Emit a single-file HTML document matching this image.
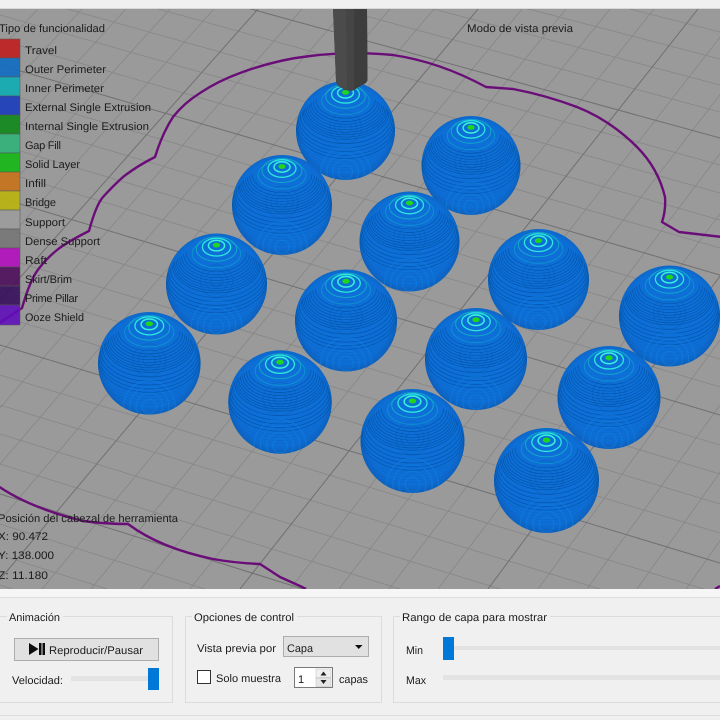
<!DOCTYPE html>
<html lang="es"><head><meta charset="utf-8"><title>Vista previa</title>
<style>
html,body{margin:0;padding:0;width:720px;height:720px;overflow:hidden;background:#f0f0f0}
svg{display:block;overflow:hidden}
text{font-family:"Liberation Sans",sans-serif;font-size:11px;fill:#1a1a1a;text-rendering:geometricPrecision}
</style></head><body>
<svg width="720" height="720" viewBox="0 0 720 720" xmlns="http://www.w3.org/2000/svg">
<defs>
<filter id="b" filterUnits="userSpaceOnUse" x="0" y="0" width="720" height="720"><feGaussianBlur stdDeviation=".35"/></filter>
<radialGradient id="sg" cx="50%" cy="48%" r="52%"><stop offset="0" stop-color="#0b6fd8"/><stop offset=".85" stop-color="#0a6ed6"/><stop offset="1" stop-color="#0a60bb"/></radialGradient>
<clipPath id="vp"><rect x="0" y="9" width="720" height="580"/></clipPath>
<clipPath id="cc"><circle r="50"/></clipPath>
<g id="s">
<circle r="50" fill="url(#sg)"/>
<g clip-path="url(#cc)" fill="none">
<g stroke="#05509f" stroke-width=".7" stroke-opacity=".75">
<path d="M-30 -31.2A30 18.9 0 0 0 30 -31.2"/><path d="M-32.5 -29.6A32.5 20.5 0 0 0 32.5 -29.6"/><path d="M-34.7 -28.1A34.7 21.9 0 0 0 34.7 -28.1"/><path d="M-36.6 -26.5A36.6 23 0 0 0 36.6 -26.5"/><path d="M-38.4 -25A38.4 24.2 0 0 0 38.4 -25"/><path d="M-40 -23.4A40 25.2 0 0 0 40 -23.4"/><path d="M-41.4 -21.8A41.4 26.1 0 0 0 41.4 -21.8"/><path d="M-42.7 -20.3A42.7 26.9 0 0 0 42.7 -20.3"/><path d="M-43.9 -18.7A43.9 27.6 0 0 0 43.9 -18.7"/><path d="M-45.8 -15.6A45.8 28.9 0 0 0 45.8 -15.6"/><path d="M-47.4 -12.5A47.4 29.9 0 0 0 47.4 -12.5"/><path d="M-48.5 -9.4A48.5 30.6 0 0 0 48.5 -9.4"/><path d="M-49.4 -6.2A49.4 31.1 0 0 0 49.4 -6.2"/><path d="M-49.8 -3.1A49.8 31.4 0 0 0 49.8 -3.1"/>
</g>
<g stroke="#0558ae" stroke-width=".5" stroke-opacity=".4">
<path d="M-50 0A50 31.5 0 0 0 50 0"/><path d="M-49.8 3.1A49.8 31.4 0 0 0 49.8 3.1"/><path d="M-49.4 6.2A49.4 31.1 0 0 0 49.4 6.2"/><path d="M-48.5 9.4A48.5 30.6 0 0 0 48.5 9.4"/>
</g>
<g stroke="#054f9f" stroke-width="1" stroke-opacity=".25"><circle cy="-3" r="6"/><circle cy="-3" r="11"/><circle cy="-3" r="16"/></g>
<g stroke="#1b86e6" stroke-width="1.2" stroke-opacity=".4"><circle cy="42" r="7"/><circle cy="42" r="13"/><circle cy="42" r="19"/><circle cy="42" r="25"/></g>
<ellipse cy="-30" rx="24" ry="14" stroke="#18b0c8" stroke-width=".9" stroke-opacity=".55"/>
<ellipse cy="-34.500" rx="20" ry="12" stroke="#17b4c8" stroke-width="1" stroke-opacity=".8"/>
<ellipse cy="-36.500" rx="14" ry="8.800" stroke="#2de6dc" stroke-width="1.300"/>
<ellipse cy="-38" rx="8" ry="5.200" stroke="#39f0dc" stroke-width="1.500"/>
</g>
<ellipse cy="-38.500" rx="3.600" ry="2.400" fill="#20d61e"/>
</g>
</defs>

<g filter="url(#b)">
<rect width="720" height="720" fill="#f0f0f0"/>
<rect y="9" width="720" height="580" fill="#9a9a9a"/>
<rect y="8" width="720" height="1" fill="#d8d8d8"/>

<g clip-path="url(#vp)">
<g stroke="#868686" stroke-width=".8" fill="none">
<path d="M38 9L-504 589M82 9L-454 589M126 9L-405 589M170 9L-355 589M214 9L-306 589M302 9L-206 589M346 9L-157 589M390 9L-107 589M434 9L-58 589M522 9L42 589M566 9L91 589M610 9L141 589M654 9L190 589M742 9L290 589M786 9L339 589M830 9L389 589M874 9L438 589M962 9L538 589M1006 9L587 589M1050 9L637 589M1094 9L686 589"/>
<path d="M0 -152L720 32M0 -129L720 59M0 -106L720 85M0 -83L720 112M0 -35L720 165M0 -10L720 193M0 15L720 220M0 40L720 248M0 92L720 303M0 118L720 331M0 145L720 359M0 171L720 387M0 227L720 445M0 257L720 474M0 286L720 504M0 316L720 533M0 375L704 589M0 405L600 589M0 434L500 589M0 464L400 589M0 524L205 589M0 555L107 589M0 585L12 589"/>
</g>
<g stroke="#707070" stroke-width="1" fill="none">
<path d="M258 9L-256 589M478 9L-8 589M698 9L240 589M918 9L488 589M1138 9L736 589"/>
<path d="M0 -60L720 138M0 65L720 275M0 198L720 415M0 345L720 563M0 494L303 589"/>
</g>
<g stroke="#6a0f78" stroke-width="2.400" fill="none" stroke-linejoin="round">
<path d="M-2 324L22 308Q30 280 38.500 269Q47 258 57 250Q67 242 89 231Q96 205 103 197Q113 186 123 177Q137 166 155 157Q162 134 173 117Q184 103 200 93Q218 81 240 73Q275 60 310 56Q350 51 393 55Q440 62 486 87L513 89Q545 95 577 107Q610 120 637 147Q658 168 665 197Q666 210 662 222L679 232L722 237"/>
<path d="M-2 486Q30 508 83 521Q105 524 128 524Q160 548 213 559Q235 563 260 564L280 577L300 586L306 589"/>
<path d="M715 589L720 586"/>
</g>

<use href="#s" transform="translate(345.500 130.500) scale(.99)"/>
<use href="#s" transform="translate(471 165.500) scale(.99)"/>
<use href="#s" transform="translate(282 205) scale(1)"/>
<use href="#s" transform="translate(409.500 241.500) scale(1)"/>
<use href="#s" transform="translate(538.500 279.500) scale(1.010)"/>
<use href="#s" transform="translate(669.500 316) scale(1.010)"/>
<use href="#s" transform="translate(216.500 284) scale(1.010)"/>
<use href="#s" transform="translate(346 320.500) scale(1.020)"/>
<use href="#s" transform="translate(476 359) scale(1.020)"/>
<use href="#s" transform="translate(609 397.500) scale(1.030)"/>
<use href="#s" transform="translate(149.300 363.300) scale(1.026)"/>
<use href="#s" transform="translate(280 402) scale(1.035)"/>
<use href="#s" transform="translate(412.500 441) scale(1.040)"/>
<use href="#s" transform="translate(546.500 480.500) scale(1.050)"/>

<path d="M333 9H367L367.500 80Q367 83 362 85L352 91L345 90L338 86Q336 84 336 80Z" fill="#454545"/>
<path d="M333 9H346L347 89L338 86Q336 84 336 80Z" fill="#4b4b4b"/>
<path d="M354 9H367L367.500 80Q367 83 362 85L354 90Z" fill="#3e3e3e"/>

<g fill-opacity=".9" stroke="#555" stroke-width=".5">
<rect x="-1" y="39" width="21" height="19" fill="#c01f1f"/>
<rect x="-1" y="58" width="21" height="19" fill="#126cc2"/>
<rect x="-1" y="77" width="21" height="19" fill="#10adb4"/>
<rect x="-1" y="96" width="21" height="19" fill="#183cbb"/>
<rect x="-1" y="115" width="21" height="19" fill="#108a1c"/>
<rect x="-1" y="134" width="21" height="19" fill="#30b278"/>
<rect x="-1" y="153" width="21" height="19" fill="#14b815"/>
<rect x="-1" y="172" width="21" height="19" fill="#c87218"/>
<rect x="-1" y="191" width="21" height="19" fill="#bab50f"/>
<rect x="-1" y="210" width="21" height="19" fill="#9c9c9c"/>
<rect x="-1" y="229" width="21" height="19" fill="#777"/>
<rect x="-1" y="248" width="21" height="19" fill="#b20dbd"/>
<rect x="-1" y="267" width="21" height="19" fill="#4c105c"/>
<rect x="-1" y="286" width="21" height="19" fill="#37105c"/>
<rect x="-1" y="305" width="21" height="20" fill="#600eba"/>
</g>

<text x="-1" y="32" textLength="106" lengthAdjust="spacingAndGlyphs">Tipo de funcionalidad</text>
<text x="25" y="54" textLength="32" lengthAdjust="spacingAndGlyphs">Travel</text>
<text x="25" y="73" textLength="81" lengthAdjust="spacingAndGlyphs">Outer Perimeter</text>
<text x="25" y="92" textLength="79" lengthAdjust="spacingAndGlyphs">Inner Perimeter</text>
<text x="25" y="111" textLength="126" lengthAdjust="spacingAndGlyphs">External Single Extrusion</text>
<text x="25" y="130" textLength="124" lengthAdjust="spacingAndGlyphs">Internal Single Extrusion</text>
<text x="25" y="149" textLength="36" lengthAdjust="spacing">Gap Fill</text>
<text x="25" y="168" textLength="55" lengthAdjust="spacingAndGlyphs">Solid Layer</text>
<text x="25" y="187" textLength="21" lengthAdjust="spacingAndGlyphs">Infill</text>
<text x="25" y="206" textLength="31" lengthAdjust="spacing">Bridge</text>
<text x="25" y="226" textLength="40" lengthAdjust="spacingAndGlyphs">Support</text>
<text x="25" y="245" textLength="75" lengthAdjust="spacingAndGlyphs">Dense Support</text>
<text x="25" y="264" textLength="22" lengthAdjust="spacingAndGlyphs">Raft</text>
<text x="25" y="283" textLength="47" lengthAdjust="spacing">Skirt/Brim</text>
<text x="25" y="302" textLength="53" lengthAdjust="spacing">Prime Pillar</text>
<text x="25" y="321" textLength="59" lengthAdjust="spacingAndGlyphs">Ooze Shield</text>
<text x="467" y="32" textLength="106" lengthAdjust="spacingAndGlyphs">Modo de vista previa</text>
<text x="-2" y="522" textLength="180" lengthAdjust="spacingAndGlyphs">Posición del cabezal de herramienta</text>
<text x="-2" y="540" textLength="50" lengthAdjust="spacingAndGlyphs">X: 90.472</text>
<text x="-2" y="559" textLength="56" lengthAdjust="spacingAndGlyphs">Y: 138.000</text>
<text x="-2" y="579" textLength="50" lengthAdjust="spacingAndGlyphs">Z: 11.180</text>
</g>

<rect y="589" width="720" height="8" fill="#f6f6f6"/>
<rect y="597" width="720" height="1" fill="#dedede"/>
<rect y="715" width="720" height="1" fill="#dcdcdc"/>

<g fill="none" stroke="#dcdcdc" stroke-width="1">
<path d="M0 616.500H172.500V702.500H0"/>
<rect x="185.500" y="616.500" width="196" height="86"/>
<path d="M720 616.500H393.500V702.500H720"/>
</g>
<rect x="7" y="612" width="56" height="10" fill="#f0f0f0"/>
<rect x="192" y="612" width="105" height="10" fill="#f0f0f0"/>
<rect x="400" y="612" width="150" height="10" fill="#f0f0f0"/>
<text x="9" y="621" textLength="51" lengthAdjust="spacingAndGlyphs">Animación</text>
<text x="194" y="621" textLength="100" lengthAdjust="spacingAndGlyphs">Opciones de control</text>
<text x="402" y="621" textLength="145" lengthAdjust="spacingAndGlyphs">Rango de capa para mostrar</text>

<rect x="14.500" y="638.500" width="144" height="22" fill="#e1e1e1" stroke="#adadad"/>
<path d="M29 643V655L38.500 649Z" fill="#111"/>
<rect x="39" y="643" width="2.500" height="12" fill="#111"/>
<rect x="42.500" y="643" width="2.500" height="12" fill="#111"/>
<text x="49" y="654" textLength="94" lengthAdjust="spacingAndGlyphs">Reproducir/Pausar</text>

<text x="12" y="684" textLength="51" lengthAdjust="spacingAndGlyphs">Velocidad:</text>
<rect x="71" y="676" width="88" height="5" fill="#e3e3e3"/>
<rect x="148" y="668" width="11" height="22" fill="#0078d7"/>

<text x="197" y="652" textLength="79" lengthAdjust="spacingAndGlyphs">Vista previa por</text>
<rect x="283.500" y="636.500" width="85" height="20" fill="#e1e1e1" stroke="#adadad"/>
<text x="287" y="652" textLength="26" lengthAdjust="spacingAndGlyphs">Capa</text>
<path d="M355 645H362.500L358.750 649Z" fill="#111"/>

<rect x="197.500" y="670.500" width="13" height="13" fill="#fff" stroke="#333"/>
<text x="216" y="682" textLength="65" lengthAdjust="spacingAndGlyphs">Solo muestra</text>
<rect x="294.500" y="667.500" width="38" height="20" fill="#fff" stroke="#7a7a7a"/>
<text x="298" y="683">1</text>
<rect x="316" y="669" width="15" height="8.500" fill="#f0f0f0" stroke="#bbb" stroke-width=".5"/>
<rect x="316" y="678" width="15" height="8.500" fill="#e6e6e6" stroke="#bbb" stroke-width=".5"/>
<path d="M320.500 675.500H326.500L323.500 671.500Z" fill="#222"/>
<path d="M320.500 680H326.500L323.500 684Z" fill="#222"/>
<text x="339" y="683" textLength="29" lengthAdjust="spacingAndGlyphs">capas</text>

<text x="406" y="654" textLength="17" lengthAdjust="spacingAndGlyphs">Min</text>
<text x="406" y="684" textLength="20" lengthAdjust="spacingAndGlyphs">Max</text>
<rect x="454" y="646" width="266" height="4" fill="#e3e3e3"/>
<rect x="443" y="637" width="11" height="23" fill="#0078d7"/>
<rect x="443" y="675" width="277" height="5" fill="#e3e3e3"/>
</g>
</svg>
</body></html>
